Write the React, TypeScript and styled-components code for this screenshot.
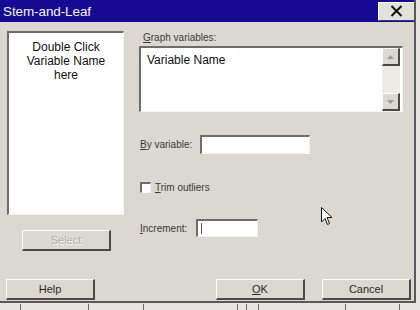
import React from 'react'
import styled, { createGlobalStyle, css } from 'styled-components'

const Global = createGlobalStyle`
  html, body {
    margin: 0;
    padding: 0;
    background: #e6e5e1;
  }
  body {
    font-family: "Liberation Sans", Arial, sans-serif;
  }
`

const raised = css`
  background: #dad8d1;
  border-top: 1px solid #fbfbf9;
  border-left: 1px solid #fbfbf9;
  border-right: 2px solid #4a4a48;
  border-bottom: 2px solid #4a4a48;
  box-sizing: border-box;
`

const sunken = css`
  background: #fff;
  border-top: 2px solid #6e6d6a;
  border-left: 2px solid #6e6d6a;
  border-right: 1px solid #f4f3ef;
  border-bottom: 1px solid #f4f3ef;
  box-sizing: border-box;
`

const Page = styled.div`
  position: relative;
  width: 420px;
  height: 310px;
  overflow: hidden;
`

const Window = styled.div`
  width: 416px;
  height: 303px;
  background: #dad8d1;
  border-right: 2px solid #5a5957;
  border-bottom: 2px solid #5a5957;
  box-sizing: border-box;
  display: flex;
  flex-direction: column;
`

const TitleBar = styled.div`
  height: 22px;
  background: #170a92;
  display: flex;
  align-items: center;
  justify-content: space-between;
  padding: 0 0 0 3px;
`

const Title = styled.span`
  color: #f4f4fb;
  font-size: 13.5px;
  letter-spacing: -0.1px;
`

const CloseButton = styled.div`
  width: 36px;
  height: 19px;
  background: #e2e0da;
  border-top: 1px solid #fff;
  border-left: 1px solid #fff;
  border-bottom: 1px solid #3b3a6e;
  box-sizing: border-box;
  display: flex;
  align-items: center;
  justify-content: center;
`

const Body = styled.div`
  display: flex;
  padding: 9px 0 0 7px;
  height: 248px;
  box-sizing: border-box;
`

const LeftColumn = styled.div`
  width: 117px;
  display: flex;
  flex-direction: column;
`

const ListBox = styled.div`
  ${sunken};
  height: 184px;
  padding-top: 7px;
  text-align: center;
  font-size: 12px;
  line-height: 14px;
  color: #111;
`

const Button = styled.div<{ $width: number; $disabled?: boolean }>`
  ${raised};
  width: ${p => p.$width}px;
  height: 21px;
  display: flex;
  align-items: center;
  justify-content: center;
  font-size: 11px;
  color: ${p => (p.$disabled ? '#b0afab' : '#2a2a2a')};
  text-shadow: ${p => (p.$disabled ? '1px 1px 0 #f6f5f2' : 'none')};
`

const SelectWrap = styled.div`
  margin: 15px 0 0 15px;
`

const RightColumn = styled.div`
  margin-left: 15px;
  display: flex;
  flex-direction: column;
`

const Label = styled.span<{ $width?: number }>`
  font-size: 10px;
  color: #3a3a3a;
  ${p => p.$width && `width: ${p.$width}px;`}
`

const GraphLabel = styled(Label)`
  display: block;
  margin: 1px 0 2px 4px;
  line-height: 12px;
`

const VarBox = styled.div`
  ${sunken};
  width: 264px;
  height: 66px;
  display: flex;
  justify-content: space-between;
`

const VarText = styled.div`
  font-size: 12px;
  color: #111;
  padding: 5px 0 0 6px;
`

const ScrollBar = styled.div`
  width: 18px;
  margin-right: 2px;
  background: #ecebe6;
  display: flex;
  flex-direction: column;
  justify-content: space-between;
`

const ScrollButton = styled.div`
  ${raised};
  height: 18px;
  display: flex;
  align-items: center;
  justify-content: center;
`

const Row = styled.div<{ $top: number }>`
  display: flex;
  align-items: center;
  margin-top: ${p => p.$top}px;
  padding-left: 1px;
`

const Field = styled.div<{ $width: number; $height: number }>`
  ${sunken};
  width: ${p => p.$width}px;
  height: ${p => p.$height}px;
  padding: 2px 0 0 3px;
`

const Caret = styled.div`
  width: 1px;
  height: 11px;
  background: #555;
`

const CheckBox = styled.div`
  ${sunken};
  width: 11px;
  height: 11px;
  margin-right: 4px;
`

const Footer = styled.div`
  display: flex;
  justify-content: space-between;
  padding: 9px 3px 0 6px;
`

const ButtonGroup = styled.div`
  display: flex;
  gap: 17px;
`

const Cursor = styled.svg`
  position: absolute;
  left: 321px;
  top: 207px;
`

const Desk = styled.div`
  height: 7px;
  position: relative;
`

const Tick = styled.div<{ $x: number }>`
  position: absolute;
  left: ${p => p.$x}px;
  top: 1px;
  width: 1px;
  height: 6px;
  background: #6a6a68;
`

const Arrow = ({ up }: { up?: boolean }) => (
  <svg width="7" height="4" viewBox="0 0 7 4">
    <path d={up ? 'M0 4 L3.5 0 L7 4 Z' : 'M0 0 L3.5 4 L7 0 Z'} fill="#9c9b97" />
  </svg>
)

export default function App() {
  return (
    <Page>
      <Global />
      <Window>
        <TitleBar>
          <Title>Stem-and-Leaf</Title>
          <CloseButton>
            <svg width="13" height="12" viewBox="0 0 13 12">
              <path d="M1.5 1 L11.5 11 M11.5 1 L1.5 11" stroke="#111" strokeWidth="2" />
            </svg>
          </CloseButton>
        </TitleBar>
        <Body>
          <LeftColumn>
            <ListBox>
              Double Click
              <br />
              Variable Name
              <br />
              here
            </ListBox>
            <SelectWrap>
              <Button $width={89} $disabled>Select</Button>
            </SelectWrap>
          </LeftColumn>
          <RightColumn>
            <GraphLabel>
              <u>G</u>raph variables:
            </GraphLabel>
            <VarBox>
              <VarText>Variable Name</VarText>
              <ScrollBar>
                <ScrollButton><Arrow up /></ScrollButton>
                <ScrollButton><Arrow /></ScrollButton>
              </ScrollBar>
            </VarBox>
            <Row $top={23}>
              <Label $width={60}>
                <u>B</u>y variable:
              </Label>
              <Field $width={110} $height={19} />
            </Row>
            <Row $top={28}>
              <CheckBox />
              <Label>
                <u>T</u>rim outliers
              </Label>
            </Row>
            <Row $top={26}>
              <Label $width={56}>
                <u>I</u>ncrement:
              </Label>
              <Field $width={62} $height={18}>
                <Caret />
              </Field>
            </Row>
          </RightColumn>
        </Body>
        <Footer>
          <Button $width={89}>Help</Button>
          <ButtonGroup>
            <Button $width={89}>
              <u>O</u>K
            </Button>
            <Button $width={89}>Cancel</Button>
          </ButtonGroup>
        </Footer>
      </Window>
      <Desk>
        <Tick $x={20} />
        <Tick $x={88} />
        <Tick $x={143} />
        <Tick $x={237} />
        <Tick $x={246} />
        <Tick $x={258} />
        <Tick $x={345} />
        <Tick $x={399} />
      </Desk>
      <Cursor width="12" height="19" viewBox="0 0 12 19">
        <path d="M0.5 0.5 L0.5 15 L4 11.5 L6.5 17.5 L8.5 16.5 L6 10.5 L11 10.5 Z" fill="#fff" stroke="#111" strokeWidth="1" />
      </Cursor>
    </Page>
  )
}
